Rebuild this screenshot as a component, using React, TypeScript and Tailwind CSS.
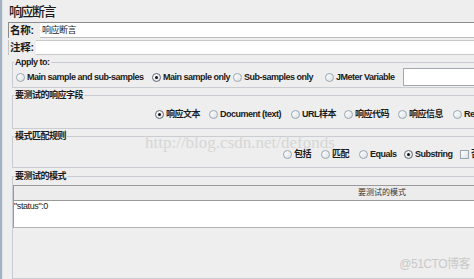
import React from "react";

function Radio({ checked, label, w }: { checked?: boolean; label: string; w: string }) {
  return (
    <div className={`flex items-center shrink-0 ${w}`}>
      <span
        className={`w-[9px] h-[9px] rounded-full border flex items-center justify-center mr-[2px] shrink-0 bg-gradient-to-br from-white to-[#dde2e6] ${
          checked ? "border-[#5d6670]" : "border-[#9aa5b0]"
        }`}
      >
        {checked && <span className="w-[3px] h-[3px] rounded-full bg-[#111]" />}
      </span>
      <span className="text-[9px] font-bold tracking-[-0.5px] leading-none whitespace-nowrap">{label}</span>
    </div>
  );
}

function Legend({ children }: { children: React.ReactNode }) {
  return (
    <legend className="ml-[1px] px-[1px] h-[12px] leading-[12px] text-[9px] font-bold tracking-[-0.5px] whitespace-nowrap">
      {children}
    </legend>
  );
}

export default function App() {
  return (
    <div className="w-[474px] h-[279px] overflow-hidden bg-[#eeeeee] relative flex text-[#1b1b1b] font-[family-name:'Liberation_Sans','Noto_Sans_CJK_SC',sans-serif]">
      <div className="w-[2px] shrink-0 bg-[#a3b0be]" />
      <div className="w-[1px] shrink-0 bg-[#dfe4ea]" />
      <div className="w-[560px] shrink-0 flex flex-col">
        {/* Title */}
        <div className="h-[22px] pl-[6px] pt-[3px] text-[13px] leading-[16px] font-medium tracking-[-1.5px] font-[family-name:'Noto_Sans_CJK_SC',sans-serif]">
          响应断言
        </div>
        {/* Name row */}
        <div className="ml-[5px] h-[16px] flex border-t border-l border-[#8c8c8c]">
          <div className="w-[31px] shrink-0 pl-[1px] text-[10.5px] font-bold tracking-[-0.3px] leading-[15px] whitespace-nowrap">
            名称:
          </div>
          <div className="flex-1 bg-white border-b border-[#bdbdbd] pl-[2px] text-[9px] tracking-[-0.5px] leading-[14px] whitespace-nowrap">
            响应断言
          </div>
        </div>
        {/* Comment row */}
        <div className="ml-[5px] mt-[2px] h-[15px] flex border-l border-[#c4c4c4]">
          <div className="w-[27px] shrink-0 pl-[1px] text-[10.5px] font-bold tracking-[-0.3px] leading-[15px] whitespace-nowrap">
            注释:
          </div>
          <div className="flex-1 bg-white border-t border-b border-[#c8c8c8]" />
        </div>

        {/* Apply to */}
        <fieldset className="ml-[9px] mt-[1px] border border-[#c9cdd1]">
          <Legend>Apply to:</Legend>
          <div className="h-[19px] flex items-center pl-[3px]">
            <Radio label="Main sample and sub-samples" w="w-[136px]" />
            <Radio checked label="Main sample only" w="w-[81px]" />
            <Radio label="Sub-samples only" w="w-[92px]" />
            <Radio label="JMeter Variable" w="w-[78px]" />
            <div className="w-[120px] h-[18px] self-start bg-white border border-[#a3a9af] shrink-0" />
          </div>
        </fieldset>

        {/* Response field */}
        <fieldset className="ml-[9px] mt-[1px] border border-[#c9cdd1]">
          <Legend>要测试的响应字段</Legend>
          <div className="h-[27px] flex items-center pl-[142px]">
            <Radio checked label="响应文本" w="w-[54px]" />
            <Radio label="Document (text)" w="w-[82px]" />
            <Radio label="URL样本" w="w-[53px]" />
            <Radio label="响应代码" w="w-[54px]" />
            <Radio label="响应信息" w="w-[55px]" />
            <Radio label="Response Headers" w="w-[100px]" />
          </div>
        </fieldset>

        {/* Pattern matching rules */}
        <fieldset className="ml-[9px] mt-[1px] border border-[#c9cdd1] relative">
          <Legend>模式匹配规则</Legend>
          <div className="h-[25px] flex items-center pl-[270px]">
            <Radio label="包括" w="w-[38px]" />
            <Radio label="匹配" w="w-[38px]" />
            <Radio label="Equals" w="w-[45px]" />
            <Radio checked label="Substring" w="w-[56px]" />
            <div className="flex items-center shrink-0">
              <span className="w-[9px] h-[9px] border border-[#9aa5b0] bg-gradient-to-br from-white to-[#dde2e6] mr-[2px]" />
              <span className="text-[9px] font-bold tracking-[-0.5px] leading-none">否</span>
            </div>
          </div>
          <div className="absolute left-[132px] top-[-9px] text-[17px] leading-[20px] text-[#d6d6d6] whitespace-nowrap font-[family-name:'Liberation_Serif',serif] pointer-events-none">
            http://blog.csdn.net/defonds
          </div>
        </fieldset>

        {/* Pattern to test */}
        <fieldset className="ml-[9px] mt-[2px] border border-[#c9cdd1] flex-1 min-h-0">
          <Legend>要测试的模式</Legend>
          <div className="mt-[3px] border-l border-[#9a9a9a]">
            <div className="h-[16px] border-t border-b border-[#9a9a9a] bg-[#ececec] pl-[344px] text-[8px] leading-[14px] text-[#333] whitespace-nowrap">
              要测试的模式
            </div>
            <div className="h-[27px] bg-white border-b border-[#b4b4b4] text-[9px] tracking-[-0.4px] leading-[11px] text-[#222] whitespace-nowrap">
              "status":0
            </div>
          </div>
        </fieldset>
      </div>

      <div className="absolute right-[4px] bottom-[8px] text-[12px] tracking-[-0.5px] leading-[14px] text-[#c9c9c9] whitespace-nowrap">
        @51CTO博客
      </div>
    </div>
  );
}
